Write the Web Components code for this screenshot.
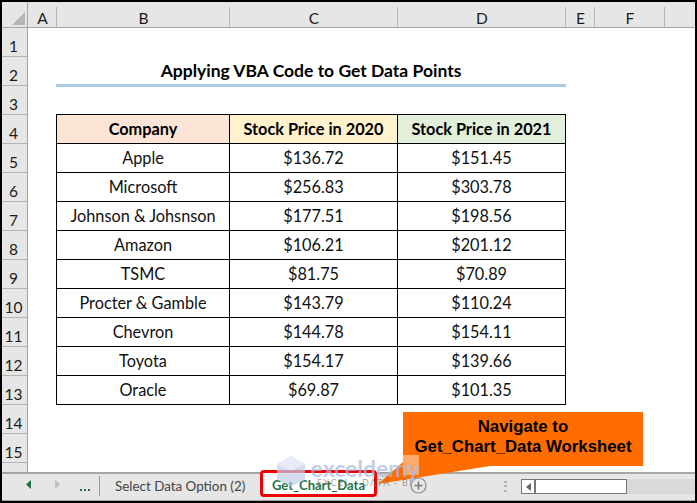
<!DOCTYPE html>
<html>
<head>
<meta charset="utf-8">
<style>
  html, body { margin: 0; padding: 0; background: #000; }
  body { width: 697px; height: 503px; overflow: hidden; font-family: Lato, "Liberation Sans", sans-serif; }
</style>
</head>
<body>
<x-workbook>
  <x-sheet>
    <x-sheet-title>Applying VBA Code to Get Data Points</x-sheet-title>
    <x-price-table></x-price-table>
  </x-sheet>
  <x-tab-bar></x-tab-bar>
  <x-watermark></x-watermark>
  <x-callout>Navigate to<br>Get_Chart_Data Worksheet</x-callout>
</x-workbook>

<script>
const COLUMNS = [['A', 29], ['B', 173], ['C', 168], ['D', 168], ['E', 29], ['F', 70]]
const ROW_COUNT = 15

const STOCKS = [
  ['Apple', '$136.72', '$151.45'],
  ['Microsoft', '$256.83', '$303.78'],
  ['Johnson & Johsnson', '$177.51', '$198.56'],
  ['Amazon', '$106.21', '$201.12'],
  ['TSMC', '$81.75', '$70.89'],
  ['Procter & Gamble', '$143.79', '$110.24'],
  ['Chevron', '$144.78', '$154.11'],
  ['Toyota', '$154.17', '$139.66'],
  ['Oracle', '$69.87', '$101.35'],
]

function esc(str) {
  return String(str).replace(/&/g, '&amp;').replace(/</g, '&lt;').replace(/>/g, '&gt;')
}

class XWorkbook extends HTMLElement {
  connectedCallback() {
    if (this.shadowRoot) return
    this.attachShadow({ mode: 'open' }).innerHTML = `
      <style>
        :host {
          display: flex;
          flex-direction: column;
          position: relative;
          box-sizing: border-box;
          width: 697px;
          height: 503px;
          border: 2px solid #000;
          background: #fff;
          overflow: hidden;
        }
      </style>
      <slot></slot>
    `
  }
}

class XSheet extends HTMLElement {
  connectedCallback() {
    if (this.shadowRoot) return
    const cols = COLUMNS.map(([name, w]) => `<div class="col" style="width:${w}px">${name}</div>`).join('')
    const rows = Array.from({ length: ROW_COUNT }, (_, i) => `<div class="row">${i + 1}</div>`).join('')
    this.attachShadow({ mode: 'open' }).innerHTML = `
      <style>
        :host {
          display: grid;
          grid-template-columns: 26px 1fr;
          grid-template-rows: 26px 1fr;
          height: 470px;
          flex: none;
          background: #fff;
          color: #1c1c1c;
          font-size: 15.5px;
        }
        .corner {
          background: #e6e6e6;
          border-right: 1px solid #a6a6a6;
          border-bottom: 1px solid #a6a6a6;
          box-sizing: border-box;
        }
        .corner svg { display: block; }
        .cols {
          display: flex;
          background: #e6e6e6;
          border-bottom: 1px solid #a6a6a6;
          box-sizing: border-box;
        }
        .col {
          box-sizing: border-box;
          display: flex;
          align-items: center;
          justify-content: center;
          position: relative;
          padding-top: 6px;
          flex: none;
        }
        .col::after {
          content: '';
          position: absolute;
          right: 0;
          top: 5px;
          bottom: 0;
          width: 1px;
          background: #b4b4b4;
        }
        .rows {
          background: #e6e6e6;
          border-right: 1px solid #a6a6a6;
          box-sizing: border-box;
        }
        .row {
          box-sizing: border-box;
          height: 29px;
          display: flex;
          align-items: center;
          justify-content: center;
          padding: 8px 2px 0 0;
          border-bottom: 1px solid #b4b4b4;
        }
        .cells { padding: 29px 0 0 28px; }
      </style>
      <div class="corner">
        <svg width="25" height="25"><polygon points="10,23 23,23 23,10" fill="#b5b5b5"/></svg>
      </div>
      <div class="cols">${cols}</div>
      <div class="rows">${rows}</div>
      <div class="cells"><slot></slot></div>
    `
  }
}

class XSheetTitle extends HTMLElement {
  connectedCallback() {
    if (this.shadowRoot) return
    this.attachShadow({ mode: 'open' }).innerHTML = `
      <style>
        :host {
          display: flex;
          align-items: center;
          justify-content: center;
          box-sizing: border-box;
          width: 510px;
          height: 30px;
          margin-bottom: 27px;
          border-bottom: 3px solid #abcdea;
          color: #000;
          font-size: 17.5px;
          font-weight: 700;
        }
      </style>
      <slot></slot>
    `
  }
}

class XPriceTable extends HTMLElement {
  connectedCallback() {
    if (this.shadowRoot) return
    const body = STOCKS.map(row => row.map(c => `<div class="cell">${esc(c)}</div>`).join('')).join('')
    this.attachShadow({ mode: 'open' }).innerHTML = `
      <style>
        :host {
          display: grid;
          grid-template-columns: 173px 168px 168px;
          grid-auto-rows: 29px;
          width: 510px;
          box-sizing: border-box;
          border-left: 1px solid #000;
          border-top: 1px solid #000;
          color: #111;
          font-size: 16.3px;
        }
        .cell {
          box-sizing: border-box;
          display: flex;
          align-items: center;
          justify-content: center;
          padding-bottom: 2px;
          border-right: 1px solid #000;
          border-bottom: 1px solid #000;
          white-space: nowrap;
        }
        .head { font-weight: 700; color: #000; }
      </style>
      <div class="cell head" style="background:#fce4d6">Company</div>
      <div class="cell head" style="background:#fff2cc">Stock Price in 2020</div>
      <div class="cell head" style="background:#e2efda">Stock Price in 2021</div>
      ${body}
    `
  }
}

class XTabBar extends HTMLElement {
  connectedCallback() {
    if (this.shadowRoot) return
    this.attachShadow({ mode: 'open' }).innerHTML = `
      <style>
        :host {
          display: flex;
          align-items: center;
          box-sizing: border-box;
          height: 29px;
          flex: none;
          padding-left: 24px;
          background: #e6e6e6;
          border-top: 2px solid #a6a6a6;
          border-bottom: 1px solid #a6a6a6;
          font-size: 13.4px;
          color: #444;
        }
        svg { display: block; flex: none; }
        .nav { margin-bottom: 5px; }
        .more { margin: 0 7px 0 19px; }
        .sep { width: 1px; height: 20px; background: #9a9a9a; flex: none; margin: 0 15px 2px 0; }
        .sheet { width: 128px; white-space: nowrap; margin: 0 17px 3px 0; }
        .active {
          box-sizing: border-box;
          width: 117px;
          height: 27px;
          align-self: flex-start;
          margin: -4px 33px 0 0;
          padding-top: 2px;
          flex: none;
          display: flex;
          align-items: center;
          justify-content: center;
          background: #fff;
          border: 3px solid #f00000;
          border-radius: 4px;
          color: #217346;
          font-size: 13px;
          font-weight: 700;
          white-space: nowrap;
        }
        .plus { margin-bottom: 4px; }
        .grip { margin: 0 14px 2px 77px; }
        .scroll {
          display: flex;
          flex: 1;
          height: 15px;
          margin: 1px 0 2px;
          background: #d9d9d9;
        }
        .thumb-box {
          display: flex;
          box-sizing: border-box;
          width: 106px;
          border: 1px solid #767676;
          background: #fff;
        }
        .step {
          width: 14px;
          box-sizing: border-box;
          border-right: 2px solid #767676;
          display: flex;
          align-items: center;
          justify-content: center;
        }
      </style>
      <svg class="nav" style="margin-right:23px" width="6" height="9"><polygon points="5,0 5,9 0,4.5" fill="#1f6e43"/></svg>
      <svg class="nav" width="6" height="9"><polygon points="0,0 0,9 5,4.5" fill="#bfbfbf"/></svg>
      <svg class="more" width="12" height="12"><g fill="#1f6e43"><rect x="0" y="8" width="2" height="2"/><rect x="4" y="8" width="2" height="2"/><rect x="8" y="8" width="2" height="2"/></g></svg>
      <div class="sep"></div>
      <div class="sheet">Select Data Option (2)</div>
      <div class="active">Get_Chart_Data</div>
      <svg class="plus" width="17" height="17"><circle cx="8.5" cy="8.5" r="7.5" fill="none" stroke="#8c8c8c" stroke-width="1.2"/><path d="M4.5 8.5h8M8.5 4.5v8" stroke="#7a7a7a" stroke-width="1.6"/></svg>
      <svg class="grip" width="3" height="11"><g fill="#b5b5b5"><rect width="3" height="2"/><rect y="4" width="3" height="2"/><rect y="9" width="3" height="2"/></g></svg>
      <div class="scroll">
        <div class="thumb-box">
          <div class="step"><svg width="5" height="8"><polygon points="5,0 5,8 0,4" fill="#666"/></svg></div>
        </div>
      </div>
    `
  }
}

class XWatermark extends HTMLElement {
  connectedCallback() {
    if (this.shadowRoot) return
    this.attachShadow({ mode: 'open' }).innerHTML = `
      <style>
        :host {
          position: absolute;
          left: 275px;
          top: 454px;
          display: flex;
          align-items: flex-start;
          gap: 5px;
          z-index: 3;
          pointer-events: none;
        }
        .veil {
          position: absolute;
          left: 126px;
          top: -1px;
          width: 16px;
          height: 20px;
          background: rgba(255,255,255,.42);
        }
        .txt { position: relative; display: flex; flex-direction: column; align-items: center; width: 110px; }
        .name { font-size: 23px; line-height: 24px; font-weight: 700; color: rgba(170,185,225,.72); white-space: nowrap; }
        .tag { font-size: 9px; line-height: 9px; margin-top: -2px; color: rgba(110,110,110,.65); letter-spacing: 1.5px; white-space: nowrap; }
      </style>
      <div class="veil"></div>
      <svg width="28" height="30" viewBox="0 0 28 30" opacity=".7">
        <polygon points="14,0 28,8 28,24 14,30 0,24 0,8" fill="#c4cee8"/>
        <polygon points="14,0 28,8 14,15 0,8" fill="#dde3f1"/>
      </svg>
      <div class="txt">
        <div class="name">exceldemy</div>
        <div class="tag">EXCEL · DATA · BI</div>
      </div>
    `
  }
}

class XCallout extends HTMLElement {
  connectedCallback() {
    if (this.shadowRoot) return
    this.attachShadow({ mode: 'open' }).innerHTML = `
      <style>
        :host {
          position: absolute;
          left: 401px;
          top: 410px;
          width: 240px;
          height: 54px;
          box-sizing: border-box;
          padding-bottom: 4px;
          display: flex;
          align-items: center;
          justify-content: center;
          text-align: center;
          background: #ff6d01;
          color: #000;
          font: 700 16.8px/20px "Liberation Sans", Arial, sans-serif;
          z-index: 2;
        }
        svg { position: absolute; left: -28px; top: 50px; overflow: visible; }
      </style>
      <svg width="120" height="30"><polygon points="28,0 115,4 3,22" fill="#ff6d01"/></svg>
      <div><slot></slot></div>
    `
  }
}

customElements.define('x-workbook', XWorkbook)
customElements.define('x-sheet', XSheet)
customElements.define('x-sheet-title', XSheetTitle)
customElements.define('x-price-table', XPriceTable)
customElements.define('x-tab-bar', XTabBar)
customElements.define('x-watermark', XWatermark)
customElements.define('x-callout', XCallout)
</script>
</body>
</html>
